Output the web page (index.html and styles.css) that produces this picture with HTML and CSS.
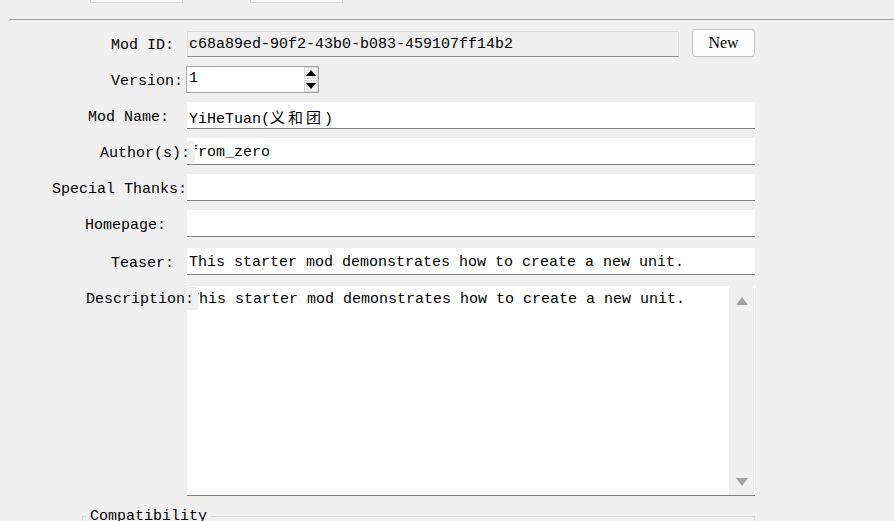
FILE: index.html
```html
<!DOCTYPE html>
<html>
<head>
<meta charset="utf-8">
<link rel="stylesheet" href="styles.css">
</head>
<body>
<div class="tabs"><div class="tab"></div><div class="tab"></div></div>
<div class="rule"></div>
<div class="form">
  <div class="row row-id">
    <div class="lbl lbl-id">Mod ID: </div>
    <div class="field-ro">c68a89ed-90f2-43b0-b083-459107ff14b2</div>
    <div class="btn-new">New</div>
  </div>
  <div class="row">
    <div class="lbl lbl-id">Version:</div>
    <div class="spin">
      <div class="spin-val">1</div>
      <div class="spin-btns">
        <div class="sb"><span class="tri-up"></span></div>
        <div class="sb"><span class="tri-down"></span></div>
      </div>
    </div>
  </div>
  <div class="row">
    <div class="lbl lbl-r">Mod Name:  </div>
    <div class="field">YiHeTuan(<span class="cjk">义和团</span>)</div>
  </div>
  <div class="row">
    <div class="lbl lbl-over lbl-author">Author(s):</div>
    <div class="field">from_zero</div>
  </div>
  <div class="row">
    <div class="lbl lbl-r">Special Thanks:</div>
    <div class="field"></div>
  </div>
  <div class="row">
    <div class="lbl">Homepage:  </div>
    <div class="field"></div>
  </div>
  <div class="row row-gap2">
    <div class="lbl lbl-id">Teaser: </div>
    <div class="field">This starter mod demonstrates how to create a new unit.</div>
  </div>
  <div class="row row-desc">
    <div class="lbl lbl-over lbl-desc">Description:</div>
    <div class="desc">
      <div class="desc-text">This starter mod demonstrates how to create a new unit.</div>
      <div class="vscroll"><span class="arr-up"></span><span class="arr-down"></span></div>
    </div>
  </div>
</div>
<fieldset class="group">
  <legend class="group-title">Compatibility</legend>
</fieldset>
</body>
</html>
```

FILE: styles.css
```css
html, body {
  margin: 0;
  height: 100%;
  overflow: hidden;
  background: #f0f0f0;
}
body {
  font-family: "Liberation Mono", "Noto Sans CJK SC", monospace;
  font-size: 15px;
  color: #000;
}
.tabs {
  display: flex;
  gap: 67px;
  padding-left: 90px;
  height: 19px;
}
.tab {
  width: 91px;
  height: 2px;
  background: #fff;
  border: 1px solid #dcdcdc;
  border-top: 0;
}
.rule {
  margin-left: 9px;
  height: 1px;
  background: #a0a0a0;
}
.form {
  display: flex;
  flex-direction: column;
  gap: 9px;
  padding-top: 9px;
  width: 755px;
}
.row {
  display: flex;
  align-items: center;
  height: 27px;
}
.row-id {
  height: 28px;
  align-items: flex-end;
}
.row-gap2 {
  margin-top: 2px;
}
.row-desc {
  height: auto;
  align-items: flex-start;
  margin-top: 2px;
}
.lbl {
  width: 187px;
  flex: none;
  box-sizing: border-box;
  padding-right: 3px;
  padding-top: 3px;
  text-align: right;
  white-space: pre;
  line-height: 19px;
}
.row-id .lbl {
  align-self: center;
  margin-top: 2px;
}
.lbl-id {
  padding-right: 4px;
}
.lbl-r {
  padding-right: 0;
}
.lbl-over {
  position: relative;
  z-index: 1;
  background: #f0f0f0;
}
.lbl-author {
  width: 195px;
  margin-right: -8px;
  padding-right: 5px;
}
.lbl-desc {
  width: 198px;
  margin-right: -11px;
  padding-right: 4px;
  padding-top: 0;
  height: 23px;
  line-height: 25px;
  margin-top: 1px;
}
.field {
  flex: 1;
  height: 27px;
  box-sizing: border-box;
  background: #fff;
  border-bottom: 1px solid #808080;
  padding-left: 2px;
  line-height: 29px;
  white-space: pre;
  overflow: hidden;
}
.cjk {
  font-family: "Noto Sans CJK SC", sans-serif;
  letter-spacing: 3px;
}
.field-ro {
  flex: none;
  width: 492px;
  height: 26px;
  box-sizing: border-box;
  background: #efefef;
  border: 1px solid #dadada;
  border-bottom-color: #8a8a8a;
  padding-left: 1px;
  line-height: 26px;
  white-space: pre;
  overflow: hidden;
}
.btn-new {
  margin-left: 13px;
  width: 63px;
  height: 28px;
  box-sizing: border-box;
  border: 1px solid #c6c6c6;
  border-radius: 3px;
  background: #fdfdfd;
  font-family: "Liberation Serif", serif;
  font-size: 16px;
  display: flex;
  align-items: center;
  justify-content: center;
}
.spin {
  width: 133px;
  height: 27px;
  box-sizing: border-box;
  border: 1px solid #a5a5a5;
  background: #fff;
  margin-left: -1px;
  display: flex;
}
.spin-val {
  flex: 1;
  padding-left: 2px;
  line-height: 24px;
}
.spin-btns {
  display: flex;
  flex-direction: column;
  gap: 1px;
  width: 14px;
}
.sb {
  flex: 1;
  background: #f3f3f3;
  border: 1px solid #d8d8d8;
  display: flex;
  align-items: center;
  justify-content: center;
}
.tri-up {
  width: 0;
  height: 0;
  border-left: 5px solid transparent;
  border-right: 5px solid transparent;
  border-bottom: 6px solid #000;
}
.tri-down {
  width: 0;
  height: 0;
  border-left: 5px solid transparent;
  border-right: 5px solid transparent;
  border-top: 6px solid #000;
}
.desc {
  flex: 1;
  height: 210px;
  box-sizing: border-box;
  display: flex;
  background: #fff;
  border-bottom: 1px solid #808080;
}
.desc-text {
  flex: 1;
  padding: 5px 3px 4px;
  line-height: 17px;
  white-space: pre;
  overflow: hidden;
}
.vscroll {
  width: 25px;
  background: #f0f0f0;
  border-right: 1px solid #fff;
  display: flex;
  flex-direction: column;
  justify-content: space-between;
  align-items: center;
  padding: 11px 0 9px;
}
.arr-up {
  width: 0;
  height: 0;
  border-left: 6px solid transparent;
  border-right: 6px solid transparent;
  border-bottom: 8px solid #a3a3a3;
}
.arr-down {
  width: 0;
  height: 0;
  border-left: 6px solid transparent;
  border-right: 6px solid transparent;
  border-top: 8px solid #a3a3a3;
}
.group {
  margin: 12px 0 0 82px;
  width: 673px;
  height: 40px;
  box-sizing: border-box;
  border: 1px solid #dcdcdc;
  padding: 0;
}
.group-title {
  margin-left: 3px;
  padding: 0 4px;
  line-height: 17px;
}
```
